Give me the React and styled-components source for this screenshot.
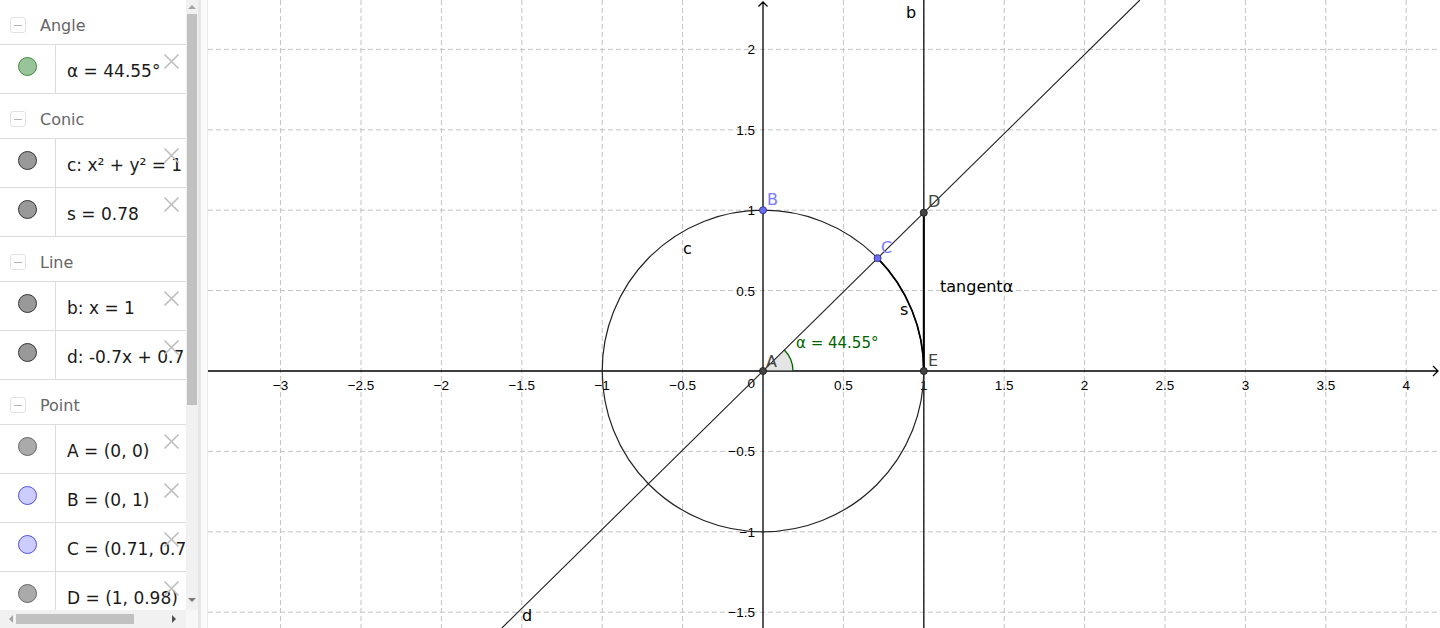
import React from 'react'
import styled, { createGlobalStyle } from 'styled-components'

const GlobalStyle = createGlobalStyle`
  html, body, #root {
    margin: 0;
    height: 100%;
    overflow: hidden;
    background: #fff;
  }
`

const Page = styled.div`
  width: 100vw;
  height: 100vh;
  display: flex;
`

/* ---------- algebra view ---------- */

const Panel = styled.aside`
  width: 198px;
  flex: none;
  height: 100%;
  display: grid;
  grid-template-columns: 186px 12px;
  grid-template-rows: 1fr 18px;
  background: #fff;
`

const List = styled.div`
  overflow: hidden;
  font-family: 'DejaVu Sans', sans-serif;
`

const GroupHeader = styled.div`
  height: 45px;
  padding: 6px 0 0 10px;
  box-sizing: border-box;
  border-bottom: 1px solid #dcdcdc;
  display: flex;
  align-items: center;
  gap: 14px;
  font-size: 16px;
  color: #666;
`

const Collapse = styled.span`
  width: 16px;
  height: 16px;
  box-sizing: border-box;
  border: 1px solid #e2e2e2;
  border-radius: 3px;
  display: flex;
  align-items: center;
  justify-content: center;

  &::after {
    content: '';
    width: 8px;
    height: 1px;
    background: #b4b4b4;
  }
`

const Item = styled.div`
  position: relative;
  height: 49px;
  box-sizing: border-box;
  border-bottom: 1px solid #dcdcdc;
  display: flex;
`

const Marker = styled.div`
  width: 56px;
  flex: none;
  border-right: 1px solid #dcdcdc;
  display: flex;
  justify-content: center;
  padding-top: 12px;
  box-sizing: border-box;
`

const Dot = styled.span`
  width: 19px;
  height: 19px;
  box-sizing: border-box;
  border-radius: 50%;
  background: ${p => p.$fill};
  border: 1px solid ${p => p.$stroke};
`

const Formula = styled.div`
  padding: 16px 0 0 11px;
  font-size: 17px;
  line-height: 20px;
  color: #1a1a1a;
  white-space: nowrap;
  overflow: hidden;
`

const Remove = styled.svg`
  position: absolute;
  top: 8px;
  right: 6px;
  width: 17px;
  height: 17px;
`

const VScroll = styled.div`
  background: #f1f1f1;
  display: flex;
  flex-direction: column;
  align-items: center;
`

const HScroll = styled.div`
  background: #f1f1f1;
  display: flex;
  align-items: center;
  padding: 0 5px;
  box-sizing: border-box;
`

const Corner = styled.div`
  background: #f7f7f7;
`

const Thumb = styled.div`
  background: #c1c1c1;
  ${p => (p.$vertical ? 'width: 10px; height: 391px;' : 'height: 10px; width: 118px;')}
`

const Arrow = styled.span`
  width: 0;
  height: 0;
  border: 4px solid transparent;
  ${p => p.$dir === 'up' && 'border-bottom: 4px solid #a3a3a3; margin: 1px 0 5px;'}
  ${p => p.$dir === 'down' && 'border-top: 4px solid #7a7a7a; margin-top: auto; margin-bottom: 4px;'}
  ${p => p.$dir === 'left' && 'border-right: 4px solid #a3a3a3; margin-right: 3px;'}
  ${p => p.$dir === 'right' && 'border-left: 4px solid #505050; margin-left: auto; margin-right: 1px;'}
`

const Separator = styled.div`
  width: 10px;
  flex: none;
  box-sizing: border-box;
  background: #fafafa;
  border-left: 3px solid #e6e6e6;
  border-right: 1px solid #ececec;
`

/* ---------- graphics view ---------- */

const Graphics = styled.svg`
  flex: 1;
  height: 100%;
  display: block;
`

const GridLine = styled.line`
  stroke: #c3c3c3;
  stroke-width: 1;
  stroke-dasharray: 5 3;
`

const AxisLine = styled.path`
  stroke: #000;
  stroke-width: 1.3;
  fill: none;
`

const AxisNumber = styled.text`
  font-family: 'Liberation Sans', Arial, sans-serif;
  font-size: 13.5px;
  fill: #000;
  text-anchor: ${p => p.$anchor || 'middle'};
`

const Curve = styled.path`
  fill: none;
  stroke: ${p => p.$color || '#222'};
  stroke-width: ${p => p.$width || 1.2};
`

const Sector = styled.path`
  fill: rgba(190, 190, 190, 0.4);
  stroke: none;
`

const Label = styled.text`
  font-family: 'DejaVu Sans', sans-serif;
  font-size: ${p => p.$size || 16}px;
  fill: ${p => p.$color || '#000'};
`

const Pt = styled.circle`
  fill: ${p => p.$fill};
  stroke: ${p => p.$stroke};
  stroke-width: 1;
`

const groups = [
  {
    title: 'Angle',
    items: [{ text: 'α = 44.55°', fill: '#99c499', stroke: '#3f8a3f' }],
  },
  {
    title: 'Conic',
    items: [
      { text: 'c: x² + y² = 1', fill: '#999', stroke: '#333' },
      { text: 's = 0.78', fill: '#999', stroke: '#333' },
    ],
  },
  {
    title: 'Line',
    items: [
      { text: 'b: x = 1', fill: '#999', stroke: '#333' },
      { text: 'd: -0.7x + 0.71y = 0', fill: '#999', stroke: '#333' },
    ],
  },
  {
    title: 'Point',
    items: [
      { text: 'A = (0, 0)', fill: '#aaa', stroke: '#666' },
      { text: 'B = (0, 1)', fill: '#ccccff', stroke: '#5050dd' },
      { text: 'C = (0.71, 0.7)', fill: '#ccccff', stroke: '#5050dd' },
      { text: 'D = (1, 0.98)', fill: '#aaa', stroke: '#666' },
    ],
  },
]

const AlgebraView = () => (
  <Panel>
    <List>
      {groups.map(g => (
        <React.Fragment key={g.title}>
          <GroupHeader>
            <Collapse />
            {g.title}
          </GroupHeader>
          {g.items.map(it => (
            <Item key={it.text}>
              <Marker>
                <Dot $fill={it.fill} $stroke={it.stroke} />
              </Marker>
              <Formula>{it.text}</Formula>
              <Remove viewBox="0 0 17 17">
                <path d="M1.5 1.5 L15.5 15.5 M15.5 1.5 L1.5 15.5" stroke="#bdbdbd" strokeWidth="1.6" />
              </Remove>
            </Item>
          ))}
        </React.Fragment>
      ))}
    </List>
    <VScroll>
      <Arrow $dir="up" />
      <Thumb $vertical />
      <Arrow $dir="down" />
    </VScroll>
    <HScroll>
      <Arrow $dir="left" />
      <Thumb />
      <Arrow $dir="right" />
    </HScroll>
    <Corner />
  </Panel>
)

// coordinate system
const OX = 763
const OY = 371
const U = 160.8
const LEFT = 208
const W = 1232
const H = 628
const sx = x => OX + x * U
const sy = y => OY - y * U

const alpha = (44.55 * Math.PI) / 180
const tanA = Math.tan(alpha)

const fmt = v => {
  const s = String(Math.abs(v))
  return v < 0 ? '−' + s : s
}

const GraphicsView = () => {
  const vLines = []
  for (let k = -8; k <= 10; k++) {
    const x = sx(k * 0.5)
    if (x > LEFT && x < LEFT + W && k !== 0) vLines.push({ k, x })
  }
  const hLines = []
  for (let k = -4; k <= 5; k++) {
    const y = sy(k * 0.5)
    if (y > 0 && y < H && k !== 0) hLines.push({ k, y })
  }

  const C = [sx(Math.cos(alpha)), sy(Math.sin(alpha))]
  const D = [sx(1), sy(tanA)]
  const r = 30
  const sectorEnd = [OX + r * Math.cos(alpha), OY - r * Math.sin(alpha)]

  return (
    <Graphics viewBox={`${LEFT} 0 ${W} ${H}`} preserveAspectRatio="none">
      {vLines.map(l => (
        <GridLine key={'v' + l.k} x1={l.x} y1={0} x2={l.x} y2={H} />
      ))}
      {hLines.map(l => (
        <GridLine key={'h' + l.k} x1={LEFT} y1={l.y} x2={LEFT + W} y2={l.y} />
      ))}

      <AxisLine d={`M${LEFT} ${OY} H1438 M1433 366 L1438 ${OY} L1433 376`} />
      <AxisLine d={`M${OX} ${H} V2 M758.5 6.5 L${OX} 2 L767.5 6.5`} />

      {vLines.map(l => (
        <AxisNumber key={'xn' + l.k} x={l.x} y={390}>
          {fmt(l.k * 0.5)}
        </AxisNumber>
      ))}
      <AxisNumber x={755} y={388} $anchor="end">0</AxisNumber>
      {hLines.map(l => (
        <AxisNumber key={'yn' + l.k} x={755} y={l.y + 5} $anchor="end">
          {fmt(l.k * 0.5)}
        </AxisNumber>
      ))}

      <Sector d={`M${OX} ${OY} L${OX + r} ${OY} A${r} ${r} 0 0 0 ${sectorEnd[0]} ${sectorEnd[1]} Z`} />
      <Curve d={`M${OX + r} ${OY} A${r} ${r} 0 0 0 ${sectorEnd[0]} ${sectorEnd[1]}`} $color="#006400" $width={1.3} />

      <circle cx={OX} cy={OY} r={U} fill="none" stroke="#222" strokeWidth="1.2" />
      <Curve d={`M${sx(1)} ${OY} A${U} ${U} 0 0 0 ${C[0]} ${C[1]}`} $color="#000" $width={1.7} />
      <Curve d={`M${sx(1)} 0 V${H}`} $color="#2a2a2a" $width={1.5} />
      <Curve d={`M${sx(1)} ${OY} V${D[1]}`} $color="#000" $width={2} />
      <Curve d={`M${OX - (H - OY) / tanA} ${H} L${OX + OY / tanA} 0`} $color="#1e1e1e" $width={1.1} />

      <Label x={683} y={254}>c</Label>
      <Label x={900} y={315}>s</Label>
      <Label x={906} y={18}>b</Label>
      <Label x={522} y={621}>d</Label>
      <Label x={940} y={292}>tangentα</Label>
      <Label x={796} y={348} $size={15} $color="#006400">α = 44.55°</Label>
      <Label x={767} y={205} $color="#7a7aff">B</Label>
      <Label x={881} y={253} $color="#7a7aff">C</Label>
      <Label x={928} y={207} $color="#444">D</Label>
      <Label x={766} y={367} $color="#444">A</Label>
      <Label x={928} y={366} $color="#444">E</Label>

      <Pt cx={OX} cy={OY} r={3.5} $fill="#444" $stroke="#222" />
      <Pt cx={sx(1)} cy={OY} r={3.5} $fill="#444" $stroke="#222" />
      <Pt cx={D[0]} cy={D[1]} r={3.5} $fill="#444" $stroke="#222" />
      <Pt cx={OX} cy={sy(1)} r={3.5} $fill="#6c6cf0" $stroke="#3434a0" />
      <Pt cx={C[0]} cy={C[1]} r={3.5} $fill="#6c6cf0" $stroke="#3434a0" />
    </Graphics>
  )
}

const App = () => (
  <>
    <GlobalStyle />
    <Page>
      <AlgebraView />
      <Separator />
      <GraphicsView />
    </Page>
  </>
)

export default App
